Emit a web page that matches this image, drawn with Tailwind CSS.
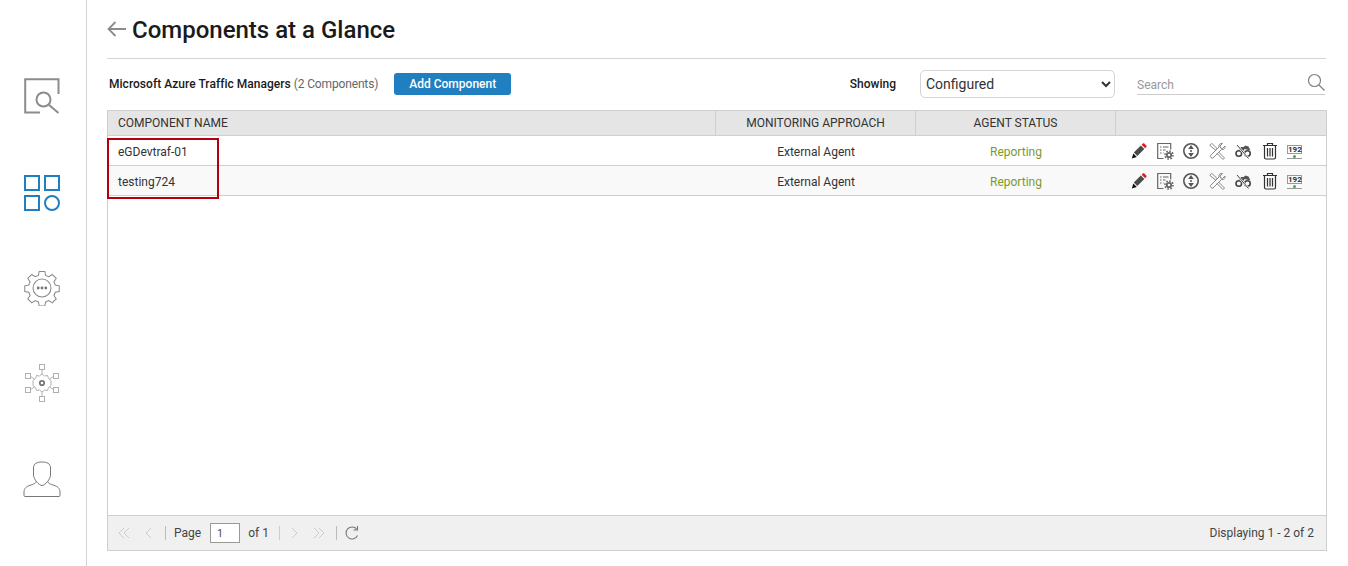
<!DOCTYPE html>
<html lang="en">
<head>
    <meta charset="UTF-8">
    <title>Components at a Glance</title>
    <script src="https://cdn.jsdelivr.net/npm/@tailwindcss/browser@4"></script>
</head>
<body class="bg-white font-['Roboto',sans-serif] text-[#222] overflow-hidden">
<div class="flex h-[566px] w-[1348px]">
    <!-- Sidebar -->
    <div class="w-[87px] h-full border-r border-[#d4d4d4] flex flex-col items-center shrink-0">
        <svg class="mt-[78px] ml-[-2px]" width="36" height="36" viewBox="0 0 36 36" fill="none" stroke="#8c8c8c">
            <path d="M16 34.500H1.200V1.200H34.500V16" stroke-width="2"/>
            <circle cx="19.500" cy="21.500" r="7" stroke-width="2"/>
            <path d="M24.500 26.500L34.500 35" stroke-width="2"/>
        </svg>
        <svg class="mt-[61px] ml-[-2px]" width="36" height="36" viewBox="0 0 36 36" fill="none" stroke="#1f7fc0" stroke-width="2">
            <rect x="1" y="1" width="14" height="14"/>
            <rect x="21" y="1" width="14" height="14"/>
            <rect x="1" y="21" width="14" height="14"/>
            <circle cx="28" cy="28" r="7"/>
        </svg>
        <svg class="mt-[59px] ml-[-2px]" width="36" height="36" viewBox="0 0 38 38" fill="none" stroke="#8a8a8a" stroke-width="1.100">
            <path d="M16 1.500h6l.8 4.200 3.400 1.400 3.600-2.400 4.200 4.200-2.400 3.600 1.400 3.400 4.200.8v6l-4.200.8-1.400 3.400 2.400 3.600-4.200 4.200-3.600-2.400-3.400 1.400-.8 4.200h-6l-.8-4.200-3.400-1.400-3.600 2.400-4.200-4.200 2.400-3.600-1.400-3.400-4.200-.8v-6l4.200-.8 1.400-3.400-2.400-3.600 4.200-4.200 3.600 2.400 3.400-1.400z"/>
            <circle cx="19" cy="19" r="9.500"/>
            <circle cx="15" cy="19" r="1.500" fill="#777" stroke="none"/>
            <circle cx="19" cy="19" r="1.500" fill="#777" stroke="none"/>
            <circle cx="23" cy="19" r="1.500" fill="#777" stroke="none"/>
        </svg>
        <svg class="mt-[58px] ml-[-2px]" width="34" height="38" viewBox="0 0 34 38" fill="none" stroke="#b0b0b0" stroke-width="1">
            <rect x="14.500" y="0.500" width="5" height="5"/>
            <rect x="14.500" y="32.500" width="5" height="5"/>
            <rect x="0.500" y="9.500" width="5" height="5"/>
            <rect x="28.500" y="9.500" width="5" height="5"/>
            <rect x="0.500" y="23.500" width="5" height="5"/>
            <rect x="28.500" y="23.500" width="5" height="5"/>
            <path d="M17 5.500V10M17 28v4.500M5.500 12.500l4 2.500M28.500 12.500l-4 2.500M5.500 25.500l4-2.500M28.500 25.500l-4-2.500"/>
            <path d="M17 10l2.500 2 3-.5 1 3 2.500 2v5l-2.500 2-1 3-3-.5L17 28l-2.500-2-3 .5-1-3L8 21.500v-5l2.500-2 1-3 3 .5z"/>
            <circle cx="17" cy="19" r="2.200" stroke="#777" stroke-width="1.800"/>
        </svg>
        <svg class="mt-[59px] ml-[-2px]" width="38" height="37" viewBox="0 0 38 37" fill="none" stroke="#777" stroke-width="1">
            <path d="M19 1c5 0 8.500 1.500 8.500 6v7c0 4-5.500 10.500-8.500 10.500S10.500 18 10.500 14V7C10.500 2.500 14 1 19 1z"/>
            <path d="M13 20.500c0 2-3 2.800-6 3.800S1 27 1 31v3.500c0 .5.500 1 1 1h34c.5 0 1-.5 1-1V31c0-4-3-5.700-6-6.700s-6-1.800-6-3.800"/>
        </svg>
    </div>

    <!-- Main -->
    <div class="flex-1 min-w-0 pl-5 pr-[21px] relative">
        <div class="h-[59px] mr-[1px] border-b border-[#d4d4d4] flex items-center pt-[1px]">
            <svg width="20" height="16" viewBox="0 0 20 16" fill="none" stroke="#8c8c8c" stroke-width="1.800" class="mr-[5px] mb-[1px]">
                <path d="M19 8H1.500M8.500 1L1.500 8l7 7"/>
            </svg>
            <h1 class="text-[24px] leading-none font-medium text-[#1a1a1a]">Components at a Glance</h1>
        </div>

        <div class="h-[51px] mr-[2px] flex items-center pb-[1px]">
            <span class="ml-[2px] text-[12px] font-medium tracking-[0.03px] text-[#1a1a1a]">Microsoft Azure Traffic Managers</span>
            <span class="ml-[3px] text-[12px] tracking-[-0.15px] text-[#666]">(2 Components)</span>
            <button class="ml-[16px] w-[117px] h-[22px] rounded-[3px] bg-[#1f7fc0] text-white text-[12px] font-medium">Add Component</button>
            <span class="ml-auto mb-[1px] text-[12px] font-medium text-[#1a1a1a]">Showing</span>
            <select class="ml-[24px] w-[195px] h-[28px] border border-[#d4d4d4] rounded-[5px] pl-[1px] text-[14px] text-[#333] bg-white">
                <option>Configured</option>
            </select>
            <div class="ml-[22px] w-[188px] h-[22px] border-b border-[#ccc] flex items-center justify-between">
                <span class="text-[12px] text-[#999] mt-[2px]">Search</span>
                <svg width="18" height="18" viewBox="0 0 18 18" fill="none" stroke="#808080" stroke-width="1.200" class="mb-[3px]">
                    <circle cx="7.500" cy="7.500" r="6"/>
                    <path d="M12 12l5.500 5.500"/>
                </svg>
            </div>
        </div>

        <!-- Table -->
        <div class="h-[441px] border border-[#cfcfcf] flex flex-col">
            <div class="h-[25px] bg-[#e5e5e5] border-b border-[#cfcfcf] flex text-[12px] text-[#333] shrink-0">
                <div class="w-[608px] border-r border-[#cfcfcf] pl-[10px] pb-[1px] flex items-center">COMPONENT NAME</div>
                <div class="w-[200px] border-r border-[#cfcfcf] pb-[1px] flex items-center justify-center">MONITORING APPROACH</div>
                <div class="w-[200px] border-r border-[#cfcfcf] pb-[1px] flex items-center justify-center">AGENT STATUS</div>
                <div class="flex-1"></div>
            </div>

            <div class="h-[30px] pt-[2px] border-b border-[#cfcfcf] flex items-center text-[12px] text-[#333] shrink-0">
                <div class="w-[608px] pl-[10px]">eGDevtraf-01</div>
                <div class="w-[200px] text-center">External Agent</div>
                <div class="w-[200px] text-center text-[#7c9a2a]">Reporting</div>
                <div class="flex-1 pl-[15px] self-start mt-[4px] flex items-start gap-[8px]">
                    <svg width="18" height="18" viewBox="0 0 18 18"><path d="M.8 16.500l1.500-5 3.500 3.500z" fill="#111"/><path d="M2.800 10.500l7-7 3.500 3.500-7 7z" fill="#4a4a4a"/><path d="M10.600 2.700l1.200-1.200c.5-.5 1-.5 1.500 0l2 2c.5.5.5 1 0 1.500l-1.200 1.200z" fill="#d8232a"/></svg>
                    <svg width="18" height="18" viewBox="0 0 18 18" fill="none" stroke="#666" stroke-width="1.200"><path d="M6.500 16.500H.7v-15h13v6"/><path d="M3 5h1.500M6 5h5.500M3 8h1.500M6 8h2.500M3 11h1.500M6 11h.5"/><circle cx="12" cy="13" r="2.200" stroke-width="1.800"/><circle cx="12" cy="13" r="4" stroke-width="1.600" stroke-dasharray="1.600 1.500"/></svg>
                    <svg width="18" height="18" viewBox="0 0 18 18" fill="none"><circle cx="8" cy="9" r="7.200" stroke="#555" stroke-width="1.600"/><path d="M8 3L10.800 7H5.200zM8 15L5.200 11h5.600z" fill="#555"/><circle cx="8" cy="9" r="1" fill="#555"/></svg>
                    <svg width="18" height="18" viewBox="0 0 18 18" fill="none" stroke="#888"><path d="M.8 3.300l2-2 5 5-1 2z"/><path d="M9.500 10l6 6-1.500 1.500-6-6"/><path d="M16 4l-2.500 2.500-2-.5-.5-2 2.500-2.500c-2-.5-4 1-3.500 3.500L1.500 13.500c-1 1 1.500 3.500 2.500 2.500l8.500-8.500c2.500.5 4-1.500 3.500-3.500z"/></svg>
                    <svg width="18" height="18" viewBox="0 0 18 18" fill="none"><circle cx="3.800" cy="11.500" r="2.800" stroke="#444" stroke-width="1.600"/><circle cx="12.400" cy="11.500" r="2.800" stroke="#444" stroke-width="1.600"/><path d="M3.500 7.500L6 5h2.500l2-1.500 3 1 2 4-6-1.500-1 2-2-1z" fill="#555"/><path d="M1.500 2.500l12 14" stroke="#fff" stroke-width="2"/><path d="M2 3l11.500 13.500" stroke="#444"/></svg>
                    <svg width="18" height="18" viewBox="0 0 18 18" fill="none" stroke="#333" stroke-width="1.200"><path d="M2 3.500h14M6.500 3.500V1.500h5v2"/><path d="M3.500 3.500v12c0 1 .5 1.500 1.500 1.500h8c1 0 1.500-.5 1.500-1.500v-12"/><path d="M6.500 6v8.500M9 6v8.500M11.500 6v8.500"/></svg>
                    <div class="w-[15px] h-[18px] flex flex-col items-center">
                        <div class="w-[15px] h-[9px] mt-[3px] border border-[#999] text-[8px] leading-[7px] font-bold text-center text-[#333]">192</div>
                        <div class="w-[3px] h-[3px] mt-[1px] rounded-full bg-[#45a845]"></div>
                        <div class="w-[15px] h-[1px] bg-[#999]"></div>
                    </div>
                </div>
            </div>

            <div class="h-[30px] pt-[2px] bg-[#f9f9f9] border-b border-[#cfcfcf] flex items-center text-[12px] text-[#333] shrink-0">
                <div class="w-[608px] pl-[10px]">testing724</div>
                <div class="w-[200px] text-center">External Agent</div>
                <div class="w-[200px] text-center text-[#7c9a2a]">Reporting</div>
                <div class="flex-1 pl-[15px] self-start mt-[4px] flex items-start gap-[8px]">
                    <svg width="18" height="18" viewBox="0 0 18 18"><path d="M.8 16.500l1.500-5 3.500 3.500z" fill="#111"/><path d="M2.800 10.500l7-7 3.500 3.500-7 7z" fill="#4a4a4a"/><path d="M10.600 2.700l1.200-1.200c.5-.5 1-.5 1.500 0l2 2c.5.5.5 1 0 1.500l-1.200 1.200z" fill="#d8232a"/></svg>
                    <svg width="18" height="18" viewBox="0 0 18 18" fill="none" stroke="#666" stroke-width="1.200"><path d="M6.500 16.500H.7v-15h13v6"/><path d="M3 5h1.500M6 5h5.500M3 8h1.500M6 8h2.500M3 11h1.500M6 11h.5"/><circle cx="12" cy="13" r="2.200" stroke-width="1.800"/><circle cx="12" cy="13" r="4" stroke-width="1.600" stroke-dasharray="1.600 1.500"/></svg>
                    <svg width="18" height="18" viewBox="0 0 18 18" fill="none"><circle cx="8" cy="9" r="7.200" stroke="#555" stroke-width="1.600"/><path d="M8 3L10.800 7H5.200zM8 15L5.200 11h5.600z" fill="#555"/><circle cx="8" cy="9" r="1" fill="#555"/></svg>
                    <svg width="18" height="18" viewBox="0 0 18 18" fill="none" stroke="#888"><path d="M.8 3.300l2-2 5 5-1 2z"/><path d="M9.500 10l6 6-1.500 1.500-6-6"/><path d="M16 4l-2.500 2.500-2-.5-.5-2 2.500-2.500c-2-.5-4 1-3.500 3.500L1.500 13.500c-1 1 1.500 3.500 2.500 2.500l8.500-8.500c2.500.5 4-1.500 3.500-3.500z"/></svg>
                    <svg width="18" height="18" viewBox="0 0 18 18" fill="none"><circle cx="3.800" cy="11.500" r="2.800" stroke="#444" stroke-width="1.600"/><circle cx="12.400" cy="11.500" r="2.800" stroke="#444" stroke-width="1.600"/><path d="M3.500 7.500L6 5h2.500l2-1.500 3 1 2 4-6-1.500-1 2-2-1z" fill="#555"/><path d="M1.500 2.500l12 14" stroke="#f9f9f9" stroke-width="2"/><path d="M2 3l11.500 13.500" stroke="#444"/></svg>
                    <svg width="18" height="18" viewBox="0 0 18 18" fill="none" stroke="#333" stroke-width="1.200"><path d="M2 3.500h14M6.500 3.500V1.500h5v2"/><path d="M3.500 3.500v12c0 1 .5 1.500 1.500 1.500h8c1 0 1.500-.5 1.500-1.500v-12"/><path d="M6.500 6v8.500M9 6v8.500M11.500 6v8.500"/></svg>
                    <div class="w-[15px] h-[18px] flex flex-col items-center">
                        <div class="w-[15px] h-[9px] mt-[3px] border border-[#999] text-[8px] leading-[7px] font-bold text-center text-[#333]">192</div>
                        <div class="w-[3px] h-[3px] mt-[1px] rounded-full bg-[#45a845]"></div>
                        <div class="w-[15px] h-[1px] bg-[#999]"></div>
                    </div>
                </div>
            </div>

            <div class="flex-1"></div>

            <!-- Pager -->
            <div class="h-[35px] bg-[#f0f0f0] border-t border-[#cfcfcf] flex items-center text-[12px] text-[#444] shrink-0">
                <svg class="ml-[10px]" width="12" height="12" viewBox="0 0 12 12" fill="none" stroke="#ccc"><path d="M6 1L1 6l5 5M11 1L6 6l5 5"/></svg>
                <svg class="ml-[14px]" width="9" height="12" viewBox="0 0 9 12" fill="none" stroke="#ccc"><path d="M7 1L2 6l5 5"/></svg>
                <div class="ml-[12px] h-[14px] w-px bg-[#bbb]"></div>
                <span class="ml-[8px]">Page</span>
                <div class="ml-[9px] w-[30px] h-[20px] border border-[#999] bg-white text-[10px] pl-[6px] leading-[20px]">1</div>
                <span class="ml-[8px]">of 1</span>
                <div class="ml-[10px] h-[14px] w-px bg-[#ccc]"></div>
                <svg class="ml-[10px]" width="9" height="12" viewBox="0 0 9 12" fill="none" stroke="#ccc"><path d="M2 1l5 5-5 5"/></svg>
                <svg class="ml-[14px]" width="12" height="12" viewBox="0 0 12 12" fill="none" stroke="#ccc"><path d="M1 1l5 5-5 5M6 1l5 5-5 5"/></svg>
                <div class="ml-[11px] h-[14px] w-px bg-[#bbb]"></div>
                <svg class="ml-[7px]" width="16" height="16" viewBox="0 0 16 16" fill="none" stroke="#777" stroke-width="1.100"><path d="M13.500 10.500A6 6 0 1 1 13 4.500"/><path d="M13.500 1v4h-4"/></svg>
                <span class="ml-auto mr-[12px] text-[#444]">Displaying 1 - 2 of 2</span>
            </div>
        </div>

        <!-- Red highlight over the name cells -->
        <div class="absolute left-[20px] top-[138px] w-[112px] h-[61px] border-2 border-[#b3000c]"></div>
    </div>
</div>
</body>
</html>
